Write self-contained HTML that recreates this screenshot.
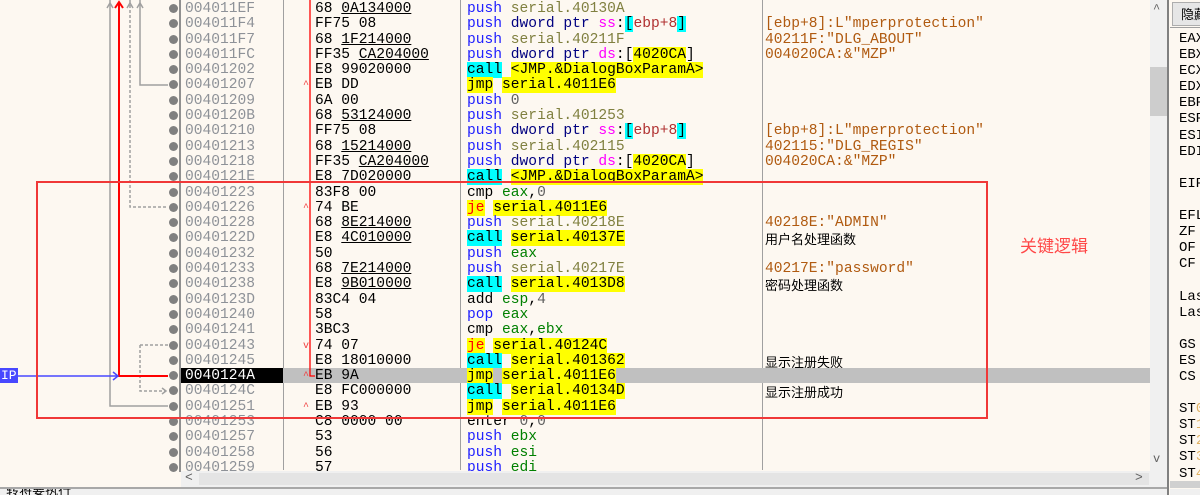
<!DOCTYPE html>
<html><head><meta charset="utf-8"><style>
*{margin:0;padding:0;box-sizing:border-box}
body{width:1200px;height:495px;overflow:hidden;background:#fdf8f1;position:relative;font-family:"Liberation Mono","Noto Sans CJK SC",monospace;font-size:14.6px;}
.rows{position:absolute;left:0;top:1px;width:1150px}
.r{position:relative;height:15.3px;line-height:15.3px;white-space:pre}
.r span{position:absolute;top:1px}
.a{left:185px;color:#8e9298}
.b{left:315px;color:#000}
.i{left:467px;color:#000}
.c{left:765px;color:#b05a10}
.cz{left:765px;color:#000;font-family:"Noto Sans CJK SC",sans-serif;font-size:13px}
.m{left:303px;color:#f04040;font-size:10px}
.r span.dot{left:169px;top:3px;width:9px;height:9px;border-radius:50%;background:#808080}
b{font-weight:normal}
.p{color:#2020ff}.o{color:#808040}.d{color:#000080}.s{color:#ff00ff}.e{color:#b03030}.g{color:#008000}.n{color:#606060}
.cy{background:#00ffff;color:#000}.ye{background:#ffff00;color:#000}.jr{background:#ffff00;color:#ff0000}
.sel{background:#c0c0c0}
</style></head><body>
<div style="position:absolute;left:283px;top:0;width:1px;height:470px;background:#a0a0a0"></div>
<div style="position:absolute;left:460px;top:0;width:1px;height:470px;background:#a0a0a0"></div>
<div style="position:absolute;left:762px;top:0;width:1px;height:470px;background:#a0a0a0"></div>
<div class="rows">
<div class="r"><span class="dot"></span><span class="a">004011EF</span><span class="b">68 <u>0A134000</u></span><span class="i"><b class="p">push</b> <b class="o">serial.40130A</b></span></div>
<div class="r"><span class="dot"></span><span class="a">004011F4</span><span class="b">FF75 08</span><span class="i"><b class="p">push</b> <b class="d">dword ptr</b> <b class="s">ss</b>:<b class="cy">[</b><b class="e">ebp+8</b><b class="cy">]</b></span><span class="c">[ebp+8]:L"mperprotection"</span></div>
<div class="r"><span class="dot"></span><span class="a">004011F7</span><span class="b">68 <u>1F214000</u></span><span class="i"><b class="p">push</b> <b class="o">serial.40211F</b></span><span class="c">40211F:"DLG_ABOUT"</span></div>
<div class="r"><span class="dot"></span><span class="a">004011FC</span><span class="b">FF35 <u>CA204000</u></span><span class="i"><b class="p">push</b> <b class="d">dword ptr</b> <b class="s">ds</b>:[<b class="ye">4020CA</b>]</span><span class="c">004020CA:&amp;"MZP"</span></div>
<div class="r"><span class="dot"></span><span class="a">00401202</span><span class="b">E8 99020000</span><span class="i"><b class="cy">call</b> <b class="ye">&lt;JMP.&amp;DialogBoxParamA&gt;</b></span></div>
<div class="r"><span class="dot"></span><span class="a">00401207</span><span class="m">^</span><span class="b">EB DD</span><span class="i"><b class="ye">jmp</b> <b class="ye">serial.4011E6</b></span></div>
<div class="r"><span class="dot"></span><span class="a">00401209</span><span class="b">6A 00</span><span class="i"><b class="p">push</b> <b class="n">0</b></span></div>
<div class="r"><span class="dot"></span><span class="a">0040120B</span><span class="b">68 <u>53124000</u></span><span class="i"><b class="p">push</b> <b class="o">serial.401253</b></span></div>
<div class="r"><span class="dot"></span><span class="a">00401210</span><span class="b">FF75 08</span><span class="i"><b class="p">push</b> <b class="d">dword ptr</b> <b class="s">ss</b>:<b class="cy">[</b><b class="e">ebp+8</b><b class="cy">]</b></span><span class="c">[ebp+8]:L"mperprotection"</span></div>
<div class="r"><span class="dot"></span><span class="a">00401213</span><span class="b">68 <u>15214000</u></span><span class="i"><b class="p">push</b> <b class="o">serial.402115</b></span><span class="c">402115:"DLG_REGIS"</span></div>
<div class="r"><span class="dot"></span><span class="a">00401218</span><span class="b">FF35 <u>CA204000</u></span><span class="i"><b class="p">push</b> <b class="d">dword ptr</b> <b class="s">ds</b>:[<b class="ye">4020CA</b>]</span><span class="c">004020CA:&amp;"MZP"</span></div>
<div class="r"><span class="dot"></span><span class="a">0040121E</span><span class="b">E8 <u>7D020000</u></span><span class="i"><b class="cy">call</b> <b class="ye">&lt;JMP.&amp;DialogBoxParamA&gt;</b></span></div>
<div class="r"><span class="dot"></span><span class="a">00401223</span><span class="b">83F8 00</span><span class="i">cmp <b class="g">eax</b>,<b class="n">0</b></span></div>
<div class="r"><span class="dot"></span><span class="a">00401226</span><span class="m">^</span><span class="b">74 BE</span><span class="i"><b class="jr">je</b> <b class="ye">serial.4011E6</b></span></div>
<div class="r"><span class="dot"></span><span class="a">00401228</span><span class="b">68 <u>8E214000</u></span><span class="i"><b class="p">push</b> <b class="o">serial.40218E</b></span><span class="c">40218E:"ADMIN"</span></div>
<div class="r"><span class="dot"></span><span class="a">0040122D</span><span class="b">E8 <u>4C010000</u></span><span class="i"><b class="cy">call</b> <b class="ye">serial.40137E</b></span><span class="cz">用户名处理函数</span></div>
<div class="r"><span class="dot"></span><span class="a">00401232</span><span class="b">50</span><span class="i"><b class="p">push</b> <b class="g">eax</b></span></div>
<div class="r"><span class="dot"></span><span class="a">00401233</span><span class="b">68 <u>7E214000</u></span><span class="i"><b class="p">push</b> <b class="o">serial.40217E</b></span><span class="c">40217E:"password"</span></div>
<div class="r"><span class="dot"></span><span class="a">00401238</span><span class="b">E8 <u>9B010000</u></span><span class="i"><b class="cy">call</b> <b class="ye">serial.4013D8</b></span><span class="cz">密码处理函数</span></div>
<div class="r"><span class="dot"></span><span class="a">0040123D</span><span class="b">83C4 04</span><span class="i">add <b class="g">esp</b>,<b class="n">4</b></span></div>
<div class="r"><span class="dot"></span><span class="a">00401240</span><span class="b">58</span><span class="i"><b class="p">pop</b> <b class="g">eax</b></span></div>
<div class="r"><span class="dot"></span><span class="a">00401241</span><span class="b">3BC3</span><span class="i">cmp <b class="g">eax</b>,<b class="g">ebx</b></span></div>
<div class="r"><span class="dot"></span><span class="a">00401243</span><span class="m">v</span><span class="b">74 07</span><span class="i"><b class="jr">je</b> <b class="ye">serial.40124C</b></span></div>
<div class="r"><span class="dot"></span><span class="a">00401245</span><span class="b">E8 18010000</span><span class="i"><b class="cy">call</b> <b class="ye">serial.401362</b></span><span class="cz">显示注册失败</span></div>
<div class="r"><div class="sel" style="position:absolute;left:283px;width:867px;height:15.3px;top:0"></div><span class="dot"></span><span class="a" style="background:#000;color:#fff;left:180px;width:103px;padding-left:5px;top:0;height:15.3px;line-height:16px">0040124A</span><span class="m">^</span><span class="b">EB 9A</span><span class="i"><b class="ye">jmp</b> <b class="ye">serial.4011E6</b></span></div>
<div class="r"><span class="dot"></span><span class="a">0040124C</span><span class="b">E8 FC000000</span><span class="i"><b class="cy">call</b> <b class="ye">serial.40134D</b></span><span class="cz">显示注册成功</span></div>
<div class="r"><span class="dot"></span><span class="a">00401251</span><span class="m">^</span><span class="b">EB 93</span><span class="i"><b class="ye">jmp</b> <b class="ye">serial.4011E6</b></span></div>
<div class="r"><span class="dot"></span><span class="a">00401253</span><span class="b">C8 0000 00</span><span class="i">enter <b class="n">0</b>,<b class="n">0</b></span></div>
<div class="r"><span class="dot"></span><span class="a">00401257</span><span class="b">53</span><span class="i"><b class="p">push</b> <b class="g">ebx</b></span></div>
<div class="r"><span class="dot"></span><span class="a">00401258</span><span class="b">56</span><span class="i"><b class="p">push</b> <b class="g">esi</b></span></div>
<div class="r"><span class="dot"></span><span class="a">00401259</span><span class="b">57</span><span class="i"><b class="p">push</b> <b class="g">edi</b></span></div>
</div>
<div style="position:absolute;left:179px;top:0;width:2px;height:472px;background:#909090"></div>
<svg style="position:absolute;left:0;top:0" width="1200" height="495">
<g fill="none" stroke="#a0a0a0" stroke-width="1.5">
<path d="M110 0V406H168"/><path d="M140 0V85H168"/>
<path d="M130 0V207H168" stroke-dasharray="3,2"/>
<path d="M140 345H168M140 345V391H166" stroke-dasharray="3,2"/>
<path d="M107 8L110 3L113 8M127 8L130 3L133 8M137 8L140 3L143 8M162 388L166 391L162 394"/>
</g>
<g fill="none" stroke="#ff0000" stroke-width="2">
<path d="M119 2V376H168"/><path d="M115 8L119 2L123 8"/>
<path d="M310 0V376H315" stroke-width="1.3"/>
</g>
<path d="M18 376H118M113 372L118 376L113 380" stroke="#4848ff" stroke-width="1.5" fill="none"/>
<rect x="37" y="182" width="950" height="236" fill="none" stroke="#f03838" stroke-width="2"/>
</svg>
<div style="position:absolute;left:0;top:368px;width:18px;height:15px;background:#4848ff;color:#fff;line-height:15px;font-size:13px;padding-left:1px">IP</div>
<div style="position:absolute;left:1020px;top:232px;color:#ff4848;font-family:'Noto Sans CJK SC',sans-serif;font-size:17px">关键逻辑</div>
<div style="position:absolute;left:1150px;top:0;width:17px;height:471px;background:#f0f0f0"></div>
<div style="position:absolute;left:1150px;top:67px;width:17px;height:49px;background:#cdcdcd"></div>
<div style="position:absolute;left:1153px;top:2px;color:#606060;font-size:12px">^</div>
<div style="position:absolute;left:1153px;top:452px;color:#606060;font-size:12px">v</div>
<div style="position:absolute;left:181px;top:471px;width:986px;height:16px;background:#f0f0f0"></div>
<div style="position:absolute;left:199px;top:473px;width:950px;height:12px;background:#e4e4e4"></div>
<div style="position:absolute;left:185px;top:470px;color:#606060;font-size:13px">&lt;</div>
<div style="position:absolute;left:1135px;top:470px;color:#606060;font-size:13px">&gt;</div>
<div style="position:absolute;left:0;top:487px;width:1168px;height:2px;background:#a8a8a8"></div>
<div style="position:absolute;left:0;top:489px;width:1168px;height:6px;background:#f0f0f0;overflow:hidden"><div style="position:relative;top:-9px;font-family:'Noto Sans CJK SC',sans-serif;font-size:13px;color:#000">*转将要执行</div></div>
<div style="position:absolute;left:1167px;top:0;width:2px;height:495px;background:#808080"></div>
<div style="position:absolute;left:1169px;top:0;width:31px;height:495px;background:#fdf8f1"></div>
<div style="position:absolute;left:1172px;top:2px;width:30px;height:24px;background:#e6e6e6;border:1px solid #adadad;font-family:'Noto Sans CJK SC',sans-serif;font-size:13px;line-height:22px;padding-left:8px;white-space:nowrap">隐藏</div>
<div style="position:absolute;left:1170px;top:27px;width:30px;height:1px;background:#a0a0a0"></div>
<div style="position:absolute;left:1179px;top:31px;font-size:14px;line-height:16.1px;white-space:pre;color:#000">EAX
EBX
ECX
EDX
EBP
ESP
ESI
EDI

EIP

EFL
ZF
OF
CF

Las
Las

GS
ES
CS

ST<b style="color:#e0b060">0</b>
ST<b style="color:#e0b060">1</b>
ST<b style="color:#e0b060">2</b>
ST<b style="color:#e0b060">3</b>
ST<b style="color:#e0b060">4</b></div>
<div style="position:absolute;left:1170px;top:481px;width:30px;height:7px;background:#d0d0d0"></div>
<div style="position:absolute;left:1170px;top:489px;width:30px;height:6px;background:#f0f0f0"></div>
</body></html>
